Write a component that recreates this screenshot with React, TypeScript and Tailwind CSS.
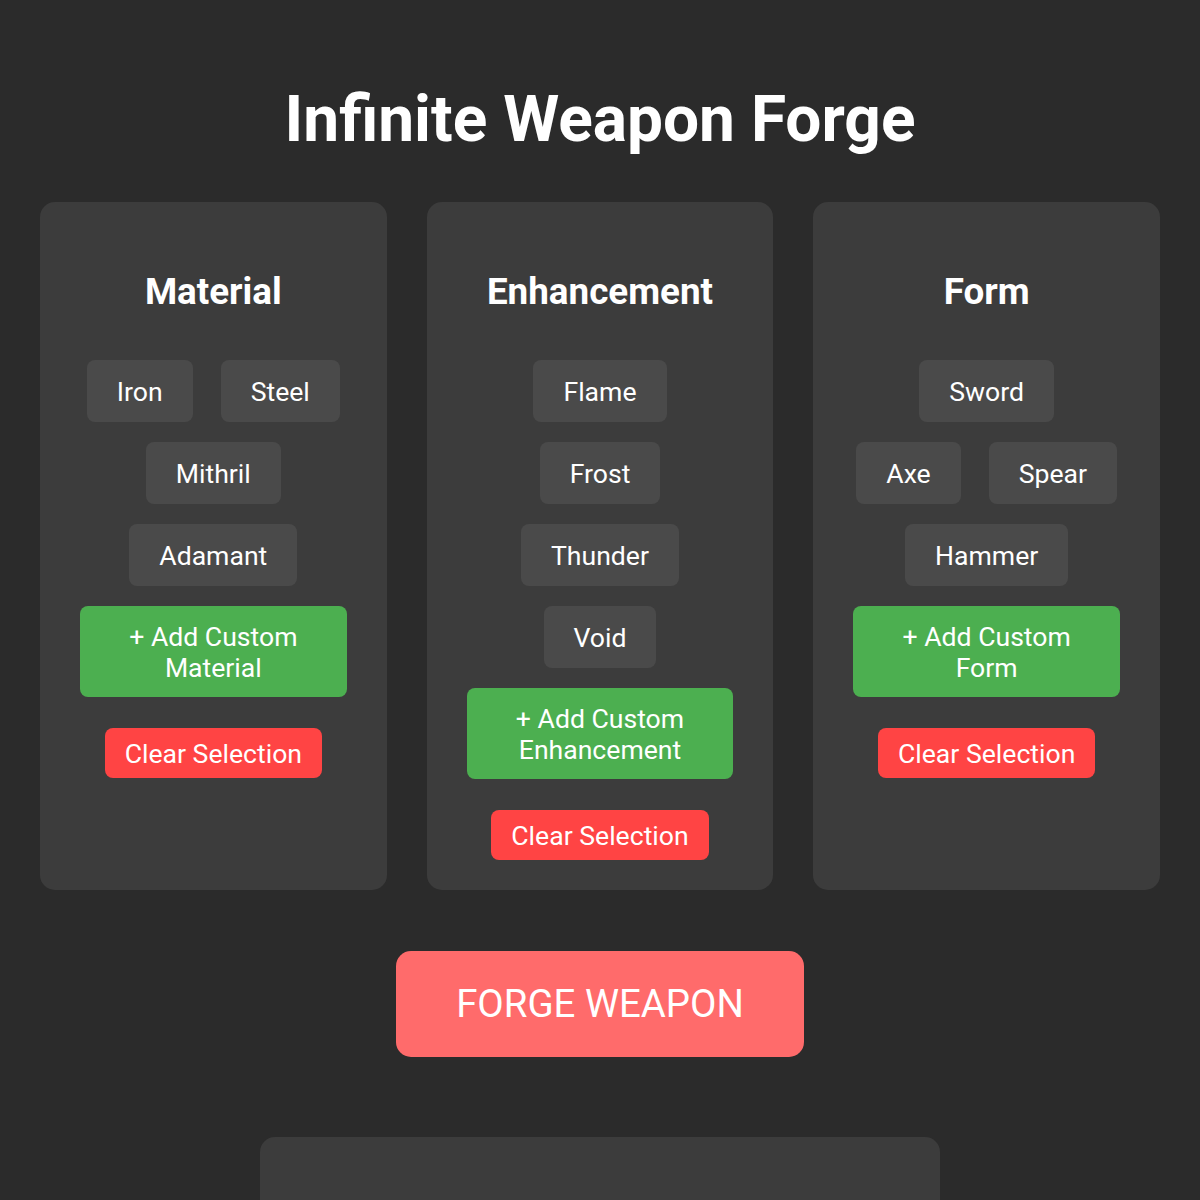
import React from "react";

type Category = {
  title: string;
  rows: string[][];
  addLabel: string;
};

const categories: Category[] = [
  {
    title: "Material",
    rows: [["Iron", "Steel"], ["Mithril"], ["Adamant"]],
    addLabel: "Material",
  },
  {
    title: "Enhancement",
    rows: [["Flame"], ["Frost"], ["Thunder"], ["Void"]],
    addLabel: "Enhancement",
  },
  {
    title: "Form",
    rows: [["Sword"], ["Axe", "Spear"], ["Hammer"]],
    addLabel: "Form",
  },
];

const Panel: React.FC<{ category: Category }> = ({ category }) => {
  return (
    <div className="flex flex-col items-center rounded-[15px] bg-[#3c3c3c] px-10 pt-[69px] pb-[30px]">
      <h2 className="text-[36.8px] font-bold leading-[42px]">{category.title}</h2>
      <div className="mt-[47px] flex flex-col items-center gap-5">
        {category.rows.map((row, i) => (
          <div key={i} className="flex justify-center gap-[28px]">
            {row.map((item) => (
              <button
                key={item}
                className="rounded-lg bg-[#4a4a4a] px-[30px] py-[15.5px] text-[26.6px] leading-[31px] text-white"
              >
                {item}
              </button>
            ))}
          </div>
        ))}
      </div>
      <button className="mt-5 w-full rounded-lg bg-[#4caf50] px-5 py-[14.5px] text-[26.6px] leading-[31px] text-white">
        + Add Custom
        <br />
        {category.addLabel}
      </button>
      <button className="mt-[31px] rounded-lg bg-[#ff4444] px-5 py-[9.5px] text-[26.6px] leading-[31px] text-white">
        Clear Selection
      </button>
    </div>
  );
};

const App: React.FC = () => {
  return (
    <div className="h-screen overflow-hidden bg-[#2b2b2b] px-10 font-['Roboto',sans-serif] text-white">
      <h1 className="pt-[82px] text-center text-[64px] font-bold leading-[75px]">
        Infinite Weapon Forge
      </h1>
      <div className="mt-[45px] grid grid-cols-3 gap-10">
        {categories.map((c) => (
          <Panel key={c.title} category={c} />
        ))}
      </div>
      <div className="mt-[61px] flex justify-center">
        <button className="h-[106px] w-[408px] rounded-[15px] bg-[#ff6b6b] text-[38.4px] text-white">
          FORGE WEAPON
        </button>
      </div>
      <div className="mx-auto mt-[80px] h-[200px] w-[680px] rounded-[15px] bg-[#3c3c3c]" />
    </div>
  );
};

export default App;
